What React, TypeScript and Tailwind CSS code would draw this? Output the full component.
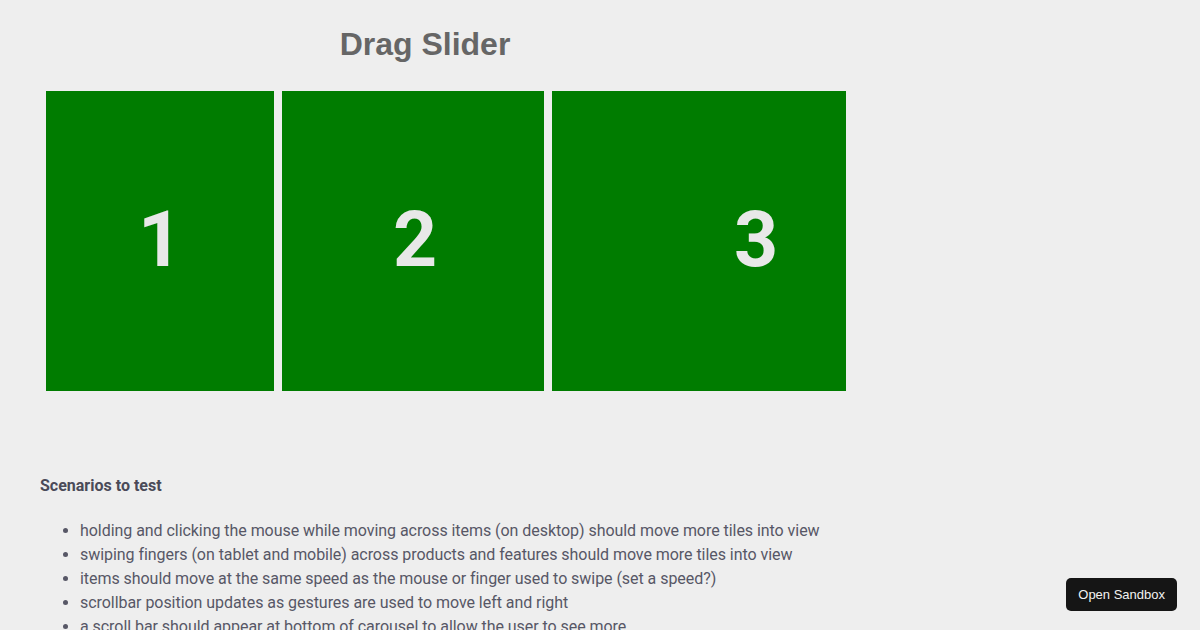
const tiles = [
  { label: "1", width: "w-[228px]", shift: "" },
  { label: "2", width: "w-[262px]", shift: "pl-[4px]" },
  { label: "3", width: "w-[408px]", shift: "" },
];

const scenarios = [
  "holding and clicking the mouse while moving across items (on desktop) should move more tiles into view",
  "swiping fingers (on tablet and mobile) across products and features should move more tiles into view",
  "items should move at the same speed as the mouse or finger used to swipe (set a speed?)",
  "scrollbar position updates as gestures are used to move left and right",
  "a scroll bar should appear at bottom of carousel to allow the user to see more",
];

export default function App() {
  return (
    <div className="relative h-[630px] w-full overflow-hidden bg-[#eeeeee] font-['Roboto',sans-serif]">
      <h1 className="mt-[26px] w-[850px] text-center font-['Liberation_Sans',Arial,sans-serif] text-[32px] font-bold leading-[37px] text-[#666666]">
        Drag Slider
      </h1>

      <div className="ml-[46px] mt-[28px] flex w-[800px] gap-2 overflow-hidden">
        {tiles.map((t) => (
          <div
            key={t.label}
            className={`${t.width} ${t.shift} flex h-[300px] flex-none items-center justify-center bg-[#007c00]`}
          >
            <span className="-mt-[2px] text-[77px] font-bold leading-none text-[#e8e8e8]">
              {t.label}
            </span>
          </div>
        ))}
      </div>

      <div className="mt-[83px] pl-[40px] text-[16px] leading-[24px]">
        <h3 className="font-bold text-[#4a4a58]">Scenarios to test</h3>
        <ul className="mt-[21px] list-disc pl-[40px] tracking-[-0.05px] text-[#575766]">
          {scenarios.map((s) => (
            <li key={s}>{s}</li>
          ))}
        </ul>
      </div>

      <button
        type="button"
        className="absolute bottom-[19px] right-[23px] h-[33px] rounded-[5px] bg-[#151515] px-[12px] font-['Liberation_Sans',Arial,sans-serif] text-[13px] text-[#f2f2f2]"
      >
        Open Sandbox
      </button>
    </div>
  );
}
